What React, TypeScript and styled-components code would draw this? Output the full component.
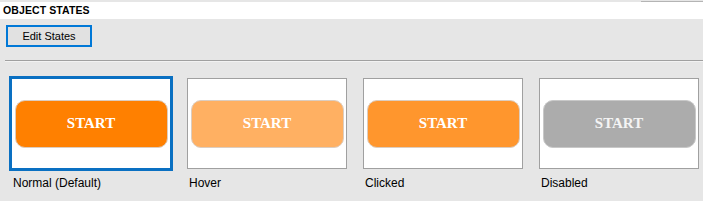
import styled, { createGlobalStyle } from "styled-components";

const GlobalStyle = createGlobalStyle`
  html, body {
    margin: 0;
    padding: 0;
    background: #e6e6e6;
    font-family: "Liberation Sans", Arial, sans-serif;
  }
`;

type StateKind = "normal" | "hover" | "clicked" | "disabled";

const states: { kind: StateKind; label: string }[] = [
  { kind: "normal", label: "Normal (Default)" },
  { kind: "hover", label: "Hover" },
  { kind: "clicked", label: "Clicked" },
  { kind: "disabled", label: "Disabled" },
];

const fills: Record<StateKind, string> = {
  normal: "#ff8000",
  hover: "#ffb062",
  clicked: "#ff962d",
  disabled: "#acacac",
};

export default function App() {
  return (
    <>
      <GlobalStyle />
      <Panel>
        <TopStrip>
          <TabEdge />
        </TopStrip>
        <Header>OBJECT STATES</Header>
        <Toolbar>
          <EditButton>Edit States</EditButton>
        </Toolbar>
        <Separator />
        <StateRow>
          {states.map((s) => (
            <StateItem key={s.kind}>
              <Preview $selected={s.kind === "normal"}>
                <StartButton $kind={s.kind}>START</StartButton>
              </Preview>
              <Label>{s.label}</Label>
            </StateItem>
          ))}
        </StateRow>
      </Panel>
    </>
  );
}

const Panel = styled.div`
  width: 703px;
  height: 201px;
  background: #e6e6e6;
  overflow: hidden;
`;

const TopStrip = styled.div`
  height: 2px;
  background: #e6e6e6;
  display: flex;
  justify-content: flex-end;
`;

const TabEdge = styled.div`
  width: 62px;
  height: 1px;
  margin-top: 1px;
  background: #b4b4b4;
`;

const Header = styled.div`
  height: 17px;
  background: #ffffff;
  padding-left: 3px;
  font-size: 10.5px;
  font-weight: 700;
  line-height: 17px;
  color: #000;
  letter-spacing: 0.1px;
`;

const Toolbar = styled.div`
  padding: 6px 0 0 6px;
  height: 41px;
  box-sizing: border-box;
`;

const EditButton = styled.div`
  width: 86px;
  height: 22px;
  box-sizing: border-box;
  border: 2px solid #0078d7;
  background: #e1e1e1;
  display: flex;
  align-items: center;
  justify-content: center;
  font-size: 11px;
  color: #000;
`;

const Separator = styled.div`
  margin-left: 5px;
  height: 1px;
  background: #a0a0a0;
  border-bottom: 1px solid #f2f2f2;
`;

const StateRow = styled.div`
  display: flex;
  gap: 16px;
  padding: 16px 0 0 11px;
`;

const StateItem = styled.div`
  display: flex;
  flex-direction: column;
  width: 160px;
`;

const Preview = styled.div<{ $selected: boolean }>`
  width: 160px;
  height: 91px;
  box-sizing: border-box;
  background: #ffffff;
  border: 1px solid #a0a0a0;
  display: flex;
  align-items: center;
  justify-content: center;
  ${(p) =>
    p.$selected &&
    `
    border: 3px solid #0a70c2;
    width: 164px;
    height: 95px;
    margin: -2px -2px;
  `}
`;

const StartButton = styled.div<{ $kind: StateKind }>`
  width: 153px;
  height: 48px;
  box-sizing: border-box;
  border-radius: 10px;
  border: 1px solid ${(p) => (p.$kind === "disabled" ? "#c8c8c8" : "#dccdc0")};
  background: ${(p) => fills[p.$kind]};
  display: flex;
  align-items: center;
  justify-content: center;
  font-family: "Liberation Serif", "Times New Roman", serif;
  font-weight: 700;
  font-size: 15px;
  color: ${(p) => (p.$kind === "disabled" ? "#f4f4f4" : "#ffffff")};
`;

const Label = styled.div`
  margin-top: 7px;
  padding-left: 2px;
  font-size: 12px;
  line-height: 14px;
  color: #000;
`;
